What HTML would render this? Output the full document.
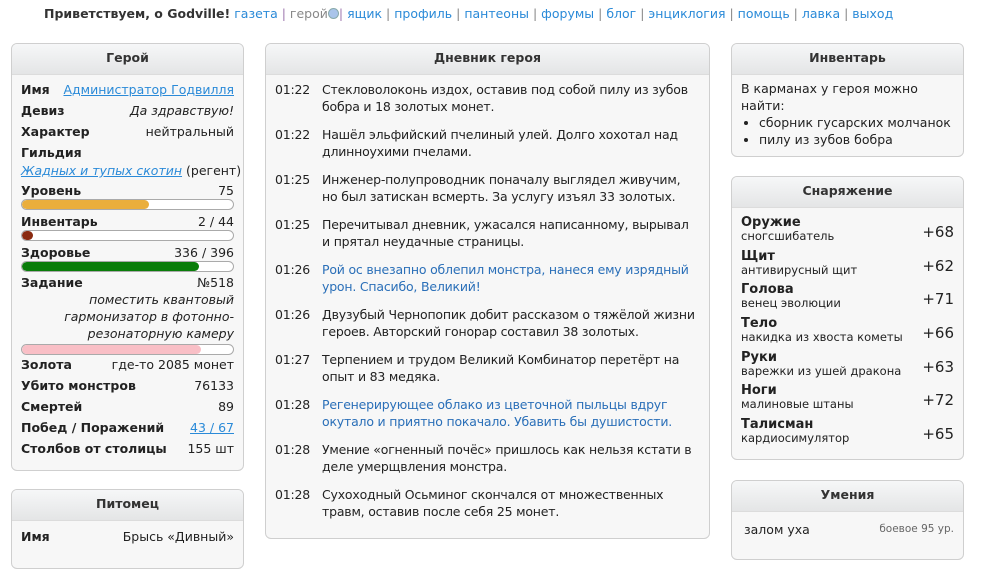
<!DOCTYPE html>
<html><head><meta charset="utf-8"><style>
*{margin:0;padding:0;box-sizing:border-box}
body{width:1000px;height:544px;overflow:hidden;background:#fff;font-family:"DejaVu Sans","Liberation Sans",sans-serif;font-size:12.5px;color:#222;position:relative}
a{color:#2a8ad8}
.top{position:absolute;top:6px;left:44px;white-space:nowrap;font-size:12.5px;color:#888}
.top b{color:#333}
.top a{text-decoration:none;color:#2a8ad8}
.top .s{color:#a07ab0}
.box{position:absolute;border:1px solid #cfcfcf;border-radius:6px;background:#f7f7f7;overflow:hidden}
.hd{height:31px;line-height:27px;text-align:center;font-weight:bold;color:#333;background:linear-gradient(#f6f7f8,#e4e5e6);border-bottom:1px solid #dcdcdc}
.r{position:absolute;left:9px;right:9px;height:21px;line-height:21px;display:flex;justify-content:space-between;white-space:nowrap}
.r b{color:#222}
.bar{position:absolute;left:9px;right:9px;height:11px;border:1px solid #aaa;border-radius:6px;background:#fff;overflow:hidden}
.bar div{height:100%;border-radius:5px}
.d{position:absolute;left:9px;right:10px;line-height:17px;display:flex;letter-spacing:-0.2px}
.d .t{width:47px;flex:none}
.d.b{color:#2a6fb8}
.e{position:absolute;left:9px;right:9px;height:34px}
.e b{display:block;font-size:13px;line-height:15px}
.e span{font-size:11.5px;line-height:13px;display:block}
.e i{position:absolute;right:0;top:8px;font-style:normal;font-size:15px}
</style></head><body>
<div class="top"><b>Приветствуем, о Godville!</b> <a>газета</a> <span class="s">|</span> герой<span style="display:inline-block;width:11px;height:11px;border-radius:50%;background:#a9c4ea;border:1px solid #8aa;vertical-align:-1px"></span><span class="s">|</span> <a>ящик</a> | <a>профиль</a> | <a>пантеоны</a> | <a>форумы</a> | <a>блог</a> | <a>энциклогия</a> | <a>помощь</a> | <a>лавка</a> | <a>выход</a></div>

<div class="box" style="left:11px;top:43px;width:233px;height:428px">
<div class="hd">Герой</div>
<div class="r" style="top:35px"><b>Имя</b><a style="text-decoration:underline">Администратор Годвилля</a></div>
<div class="r" style="top:56px"><b>Девиз</b><i>Да здравствую!</i></div>
<div class="r" style="top:77px"><b>Характер</b><span>нейтральный</span></div>
<div class="r" style="top:98px"><b>Гильдия</b></div>
<div class="r" style="top:116px;justify-content:flex-start"><a style="text-decoration:underline"><i>Жадных и тупых скотин</i></a>&nbsp;(регент)</div>
<div class="r" style="top:136px"><b>Уровень</b><span>75</span></div>
<div class="bar" style="top:155px"><div style="width:60%;background:#eaae3c"></div></div>
<div class="r" style="top:167px"><b>Инвентарь</b><span>2 / 44</span></div>
<div class="bar" style="top:186px"><div style="width:11px;background:#8a2a10"></div></div>
<div class="r" style="top:198px"><b>Здоровье</b><span>336 / 396</span></div>
<div class="bar" style="top:217px"><div style="width:84%;background:#0a7d0a"></div></div>
<div class="r" style="top:228px"><b>Задание</b><span>№518</span></div>
<div style="position:absolute;top:247px;right:9px;width:200px;text-align:right;line-height:17px"><i>поместить квантовый гармонизатор в фотонно-резонаторную камеру</i></div>
<div class="bar" style="top:300px"><div style="width:85%;background:#f9bfc6"></div></div>
<div class="r" style="top:310px"><b>Золота</b><span>где-то 2085 монет</span></div>
<div class="r" style="top:331px"><b>Убито монстров</b><span>76133</span></div>
<div class="r" style="top:352px"><b>Смертей</b><span>89</span></div>
<div class="r" style="top:373px"><b>Побед / Поражений</b><a style="text-decoration:underline">43 / 67</a></div>
<div class="r" style="top:394px"><b>Столбов от столицы</b><span>155 шт</span></div>
</div>

<div class="box" style="left:11px;top:489px;width:233px;height:80px">
<div class="hd">Питомец</div>
<div class="r" style="top:36px"><b>Имя</b><span>Брысь «Дивный»</span></div>
</div>

<div class="box" style="left:265px;top:43px;width:445px;height:496px">
<div class="hd">Дневник героя</div>
<div class="d" style="top:37px"><span class="t">01:22</span><span>Стекловолоконь издох, оставив под собой пилу из зубов бобра и 18 золотых монет.</span></div>
<div class="d" style="top:82px"><span class="t">01:22</span><span>Нашёл эльфийский пчелиный улей. Долго хохотал над длинноухими пчелами.</span></div>
<div class="d" style="top:127px"><span class="t">01:25</span><span>Инженер-полупроводник поначалу выглядел живучим, но был затискан всмерть. За услугу изъял 33 золотых.</span></div>
<div class="d" style="top:172px"><span class="t">01:25</span><span>Перечитывал дневник, ужасался написанному, вырывал и прятал неудачные страницы.</span></div>
<div class="d b" style="top:217px"><span class="t" style="color:#222">01:26</span><span>Рой ос внезапно облепил монстра, нанеся ему изрядный урон. Спасибо, Великий!</span></div>
<div class="d" style="top:262px"><span class="t">01:26</span><span>Двузубый Чернопопик добит рассказом о тяжёлой жизни героев. Авторский гонорар составил 38 золотых.</span></div>
<div class="d" style="top:307px"><span class="t">01:27</span><span>Терпением и трудом Великий Комбинатор перетёрт на опыт и 83 медяка.</span></div>
<div class="d b" style="top:352px"><span class="t" style="color:#222">01:28</span><span>Регенерирующее облако из цветочной пыльцы вдруг окутало и приятно покачало. Убавить бы душистости.</span></div>
<div class="d" style="top:397px"><span class="t">01:28</span><span>Умение «огненный почёс» пришлось как нельзя кстати в деле умерщвления монстра.</span></div>
<div class="d" style="top:442px"><span class="t">01:28</span><span>Сухоходный Осьминог скончался от множественных травм, оставив после себя 25 монет.</span></div>
</div>

<div class="box" style="left:731px;top:43px;width:233px;height:114px">
<div class="hd">Инвентарь</div>
<div style="position:absolute;top:36px;left:9px;right:9px;line-height:17px">В карманах у героя можно найти:
<ul style="margin-left:18px">
<li>сборник гусарских молчанок</li><li>пилу из зубов бобра</li></ul></div>
</div>

<div class="box" style="left:731px;top:176px;width:233px;height:284px">
<div class="hd">Снаряжение</div>
<div class="e" style="top:38px"><b>Оружие</b><span>сногсшибатель</span><i>+68</i></div>
<div class="e" style="top:72px"><b>Щит</b><span>антивирусный щит</span><i>+62</i></div>
<div class="e" style="top:105px"><b>Голова</b><span>венец эволюции</span><i>+71</i></div>
<div class="e" style="top:139px"><b>Тело</b><span>накидка из хвоста кометы</span><i>+66</i></div>
<div class="e" style="top:173px"><b>Руки</b><span>варежки из ушей дракона</span><i>+63</i></div>
<div class="e" style="top:206px"><b>Ноги</b><span>малиновые штаны</span><i>+72</i></div>
<div class="e" style="top:240px"><b>Талисман</b><span>кардиосимулятор</span><i>+65</i></div>
</div>

<div class="box" style="left:731px;top:480px;width:233px;height:80px">
<div class="hd">Умения</div>
<div class="r" style="top:38px;left:12px"><span>залом уха</span><span style="font-size:10.5px;color:#666">боевое 95 ур.</span></div>
</div>
</body></html>
